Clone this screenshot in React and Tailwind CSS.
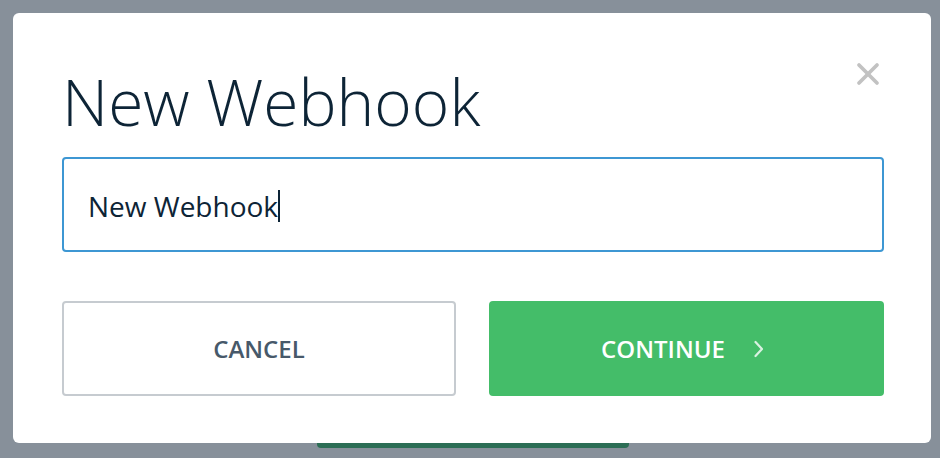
import { X } from 'lucide-react';

function Chevron() {
  return (
    <svg width="12" height="18" viewBox="0 0 12 18" fill="none" className="opacity-80">
      <path d="M2.5 2 L9 9 L2.5 16" stroke="white" strokeWidth="2.2" strokeLinecap="round" strokeLinejoin="round" />
    </svg>
  );
}

export default function App() {
  return (
    <div className="relative h-[458px] w-[940px] overflow-hidden bg-[#87909a] font-['Open_Sans',sans-serif]">
      {/* page underneath the overlay */}
      <div className="flex h-full flex-col justify-end pb-[10px] pl-[317px]">
        <div className="h-[40px] w-[312px] rounded-[4px] bg-[#2c6e55]" />
      </div>

      {/* modal */}
      <div className="absolute left-[13px] top-[13px] w-[918px] rounded-[6px] bg-white pb-[47px] pl-[49px] pr-[47px] pt-[50px]">
        <button className="absolute right-[45px] top-[43px] text-[#c2c2c2]">
          <X size={36} strokeWidth={2.5} />
        </button>

        <h1 className="text-[64px] font-light leading-[78px] text-[#0d2436]">New Webhook</h1>

        <div className="mt-[16px] flex h-[95px] items-center rounded-[4px] border-2 border-[#3d97d3] pl-[24px] pt-[2px] text-[28px] text-[#0d2436]">
          <span>New Webhook</span>
          <span className="h-[32px] w-[2px] bg-[#0d2436]" />
        </div>

        <div className="mt-[49px] flex gap-[33px]">
          <button className="flex h-[95px] w-[394px] items-center justify-center rounded-[4px] border-2 border-[#c6cbd0] bg-white text-[24px] font-semibold text-[#47596a]">
            CANCEL
          </button>
          <button className="flex h-[95px] w-[395px] items-center justify-center gap-[28px] rounded-[4px] bg-[#44bd69] pr-[7px] text-[24px] font-semibold text-white">
            CONTINUE
            <Chevron />
          </button>
        </div>
      </div>
    </div>
  );
}
